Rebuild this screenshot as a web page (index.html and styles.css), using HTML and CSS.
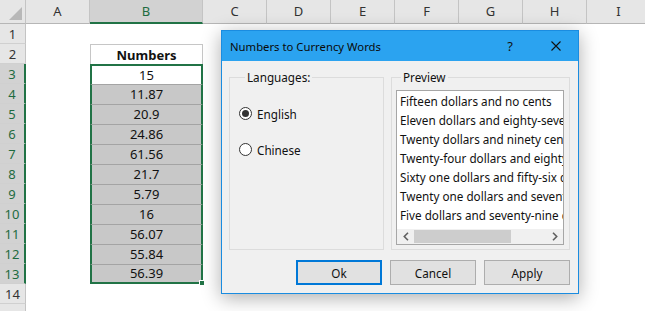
FILE: index.html
```html
<!DOCTYPE html>
<html>
<head>
  <meta charset="UTF-8">
  <link rel="stylesheet" href="styles.css">
</head>
<body>
  <div class="sheet">
    <div class="corner"><span class="corner-tri"></span></div>
    <div class="colhead">A</div>
    <div class="colhead sel">B</div>
    <div class="colhead">C</div>
    <div class="colhead">D</div>
    <div class="colhead">E</div>
    <div class="colhead">F</div>
    <div class="colhead">G</div>
    <div class="colhead">H</div>
    <div class="colhead">I</div>

    <div class="rowhead">1</div><div class="cell"></div><div class="cell"></div><div class="cell rest"></div>
    <div class="rowhead">2</div><div class="cell"></div><div class="cell title-cell">Numbers</div><div class="cell rest"></div>
    <div class="rowhead sel">3</div><div class="cell"></div><div class="cell num first">15</div><div class="cell rest"></div>
    <div class="rowhead sel">4</div><div class="cell"></div><div class="cell num">11.87</div><div class="cell rest"></div>
    <div class="rowhead sel">5</div><div class="cell"></div><div class="cell num">20.9</div><div class="cell rest"></div>
    <div class="rowhead sel">6</div><div class="cell"></div><div class="cell num">24.86</div><div class="cell rest"></div>
    <div class="rowhead sel">7</div><div class="cell"></div><div class="cell num">61.56</div><div class="cell rest"></div>
    <div class="rowhead sel">8</div><div class="cell"></div><div class="cell num">21.7</div><div class="cell rest"></div>
    <div class="rowhead sel">9</div><div class="cell"></div><div class="cell num">5.79</div><div class="cell rest"></div>
    <div class="rowhead sel">10</div><div class="cell"></div><div class="cell num">16</div><div class="cell rest"></div>
    <div class="rowhead sel">11</div><div class="cell"></div><div class="cell num">56.07</div><div class="cell rest"></div>
    <div class="rowhead sel">12</div><div class="cell"></div><div class="cell num">55.84</div><div class="cell rest"></div>
    <div class="rowhead sel">13</div><div class="cell"></div><div class="cell num last">56.39<span class="handle"></span></div><div class="cell rest"></div>
    <div class="rowhead">14</div><div class="cell"></div><div class="cell"></div><div class="cell rest"></div>
    <div class="rowhead"></div><div class="cell"></div><div class="cell"></div><div class="cell rest"></div>
  </div>

  <div class="dialog">
    <div class="titlebar">
      <span class="title">Numbers to Currency Words</span>
      <span class="help">?</span>
      <span class="close">
        <svg width="10" height="10" viewBox="0 0 10 10"><path d="M0.5 0.5 L9.5 9.5 M9.5 0.5 L0.5 9.5" stroke="#111" stroke-width="1.1" fill="none"/></svg>
      </span>
    </div>
    <div class="dialog-body">
      <div class="groups">
        <fieldset class="group lang">
          <legend>Languages:</legend>
          <label class="radio"><span class="radio-dot checked"></span>English</label>
          <label class="radio"><span class="radio-dot"></span>Chinese</label>
        </fieldset>
        <fieldset class="group preview">
          <legend>Preview</legend>
          <div class="listbox">
            <div class="lines">
              <div class="line">Fifteen dollars and no cents</div>
              <div class="line">Eleven dollars and eighty-seven cents</div>
              <div class="line">Twenty dollars and ninety cents</div>
              <div class="line">Twenty-four dollars and eighty-six cents</div>
              <div class="line">Sixty one dollars and fifty-six cents</div>
              <div class="line">Twenty one dollars and seventy cents</div>
              <div class="line">Five dollars and seventy-nine cents</div>
            </div>
            <div class="hscroll">
              <span class="arrow">
                <svg width="6" height="9" viewBox="0 0 6 9"><path d="M5 0.8 L1.3 4.5 L5 8.2" stroke="#606060" stroke-width="1.6" fill="none"/></svg>
              </span>
              <span class="track"><span class="thumb"></span></span>
              <span class="arrow">
                <svg width="6" height="9" viewBox="0 0 6 9"><path d="M1 0.8 L4.7 4.5 L1 8.2" stroke="#606060" stroke-width="1.6" fill="none"/></svg>
              </span>
            </div>
          </div>
        </fieldset>
      </div>
      <div class="buttons">
        <button class="btn default">Ok</button>
        <button class="btn">Cancel</button>
        <button class="btn">Apply</button>
      </div>
    </div>
  </div>
</body>
</html>
```

FILE: styles.css
```css
* {
  margin: 0;
  padding: 0;
  box-sizing: border-box;
}

body {
  width: 645px;
  height: 311px;
  overflow: hidden;
  background: #ffffff;
  position: relative;
  font-family: 'Noto Sans', 'Open Sans', sans-serif;
}

/* ---------- spreadsheet ---------- */

.sheet {
  display: grid;
  grid-template-columns: 26px 64px 113px repeat(7, 64px);
  grid-template-rows: 24px repeat(15, 20px);
  width: 651px;
}

.corner {
  background: #e6e6e6;
  border-right: 1px solid #c4c4c4;
  border-bottom: 1px solid #b6b6b6;
  position: relative;
}

.corner-tri {
  position: absolute;
  right: 3px;
  bottom: 3px;
  width: 0;
  height: 0;
  border-left: 13px solid transparent;
  border-bottom: 13px solid #b8b8b8;
}

.colhead {
  background: #e6e6e6;
  border-right: 1px solid #c4c4c4;
  border-bottom: 1px solid #b6b6b6;
  text-align: center;
  font-size: 13px;
  line-height: 23px;
  color: #333;
}

.colhead.sel {
  background: #d2d2d2;
  color: #1e6b40;
  border-bottom: 2px solid #217346;
}

.rest {
  grid-column: span 7;
}

.rowhead {
  background: #e6e6e6;
  border-right: 1px solid #c4c4c4;
  border-bottom: 1px solid #d0d0d0;
  text-align: center;
  font-size: 13px;
  line-height: 20px;
  color: #333;
}

.rowhead.sel {
  background: #d2d2d2;
  color: #1e6b40;
  border-right: 2px solid #217346;
}

.cell {
  background: #ffffff;
  font-size: 13px;
  line-height: 19px;
  text-align: center;
  color: #111;
}

.title-cell {
  font-weight: 700;
  border: 1px solid #c6c6c6;
  border-bottom: none;
  line-height: 20px;
}

.num {
  background: #c8c8c8;
  border-left: 2px solid #217346;
  border-right: 2px solid #217346;
  border-top: 1px solid #a4a4a4;
  position: relative;
}

.num.first {
  background: #ffffff;
  border-top: 2px solid #217346;
}

.num.last {
  border-bottom: 2px solid #217346;
  line-height: 17px;
}

.handle {
  position: absolute;
  right: -4px;
  bottom: -4px;
  width: 6px;
  height: 6px;
  background: #217346;
  border: 1px solid #ffffff;
}

/* ---------- dialog ---------- */

.dialog {
  position: absolute;
  left: 221px;
  top: 30px;
  width: 358px;
  height: 264px;
  background: #f0f0f0;
  border: 1px solid #1a8ce0;
  box-shadow: 0 4px 18px rgba(0, 0, 0, 0.32);
  font-size: 11.7px;
  color: #111;
}

.titlebar {
  height: 30px;
  background: #2ba3f0;
  display: flex;
  align-items: center;
  padding-left: 8px;
}

.title {
  flex: 1;
  font-size: 11.3px;
  color: #0a0a0a;
}

.help {
  width: 46px;
  text-align: center;
  font-size: 13px;
}

.close {
  width: 46px;
  height: 30px;
  display: flex;
  align-items: center;
  justify-content: center;
  margin-right: -1px;
}

.dialog-body {
  padding: 8px 8px 0 7px;
}

.groups {
  display: flex;
  gap: 7px;
}

.group {
  flex: none;
  min-width: 0;
  border: 1px solid #dcdcdc;
  height: 181px;
  padding: 0;
}

.group legend {
  margin-left: 6px;
  padding: 0 2px;
  font-size: 11.7px;
  line-height: 16px;
}

.lang {
  width: 155px;
  display: flex;
  flex-direction: column;
  gap: 17px;
  padding: 19px 0 0 9px;
}

.preview {
  width: 179px;
  padding: 5px 4px 0 4px;
}

.preview legend {
  margin-left: 5px;
}

.radio {
  display: flex;
  align-items: center;
  gap: 5px;
  height: 19px;
  font-size: 11.7px;
}

.radio-dot {
  width: 13px;
  height: 13px;
  border: 1px solid #333;
  border-radius: 50%;
  background: #ffffff;
  display: flex;
  align-items: center;
  justify-content: center;
}

.radio-dot.checked::after {
  content: '';
  width: 7px;
  height: 7px;
  border-radius: 50%;
  background: #333;
}

.listbox {
  width: 168px;
  height: 155px;
  border: 1px solid #a6a6a6;
  background: #ffffff;
  display: flex;
  flex-direction: column;
  overflow: hidden;
}

.lines {
  flex: 1;
  overflow: hidden;
  padding: 1px 0 0 3px;
}

.line {
  white-space: nowrap;
  line-height: 19px;
  font-size: 11.7px;
}

.hscroll {
  height: 15px;
  flex: none;
  background: #f0f0f0;
  display: flex;
}

.arrow {
  width: 17px;
  display: flex;
  align-items: center;
  justify-content: center;
}

.track {
  flex: 1;
  display: flex;
  padding: 1px 0;
}

.thumb {
  width: 97px;
  background: #cdcdcd;
}

.buttons {
  display: flex;
  justify-content: flex-end;
  gap: 8px;
  margin-top: 10px;
}

.btn {
  width: 86px;
  height: 25px;
  background: #e1e1e1;
  border: 1px solid #adadad;
  font-family: 'Noto Sans', 'Open Sans', sans-serif;
  font-size: 11.7px;
  color: #111;
}

.btn.default {
  border: 2px solid #0078d7;
}
```
